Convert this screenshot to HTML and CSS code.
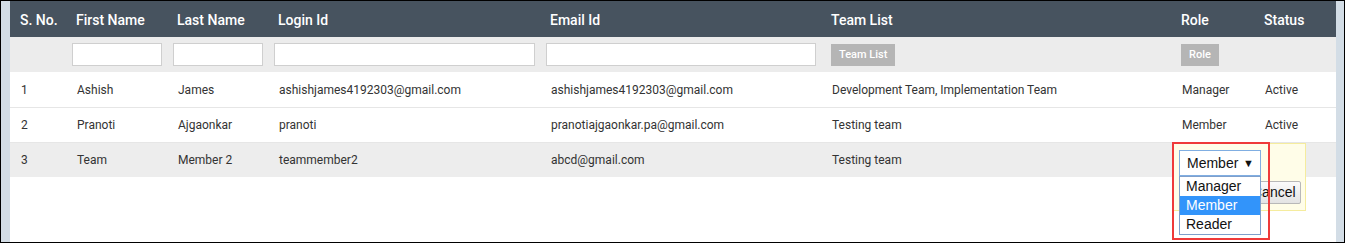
FILE: index.html
```html
<!DOCTYPE html>
<html>
<head>
<meta charset="utf-8">
<link rel="stylesheet" href="styles.css">
</head>
<body>
<div class="frame">
  <div class="content">
    <table class="grid">
      <colgroup>
        <col class="c1"><col class="c2"><col class="c3"><col class="c4"><col class="c5"><col class="c6"><col class="c7"><col class="c8">
      </colgroup>
      <thead>
        <tr class="head">
          <th>S. No.</th><th>First Name</th><th>Last Name</th><th>Login Id</th><th>Email Id</th><th>Team List</th><th>Role</th><th>Status</th>
        </tr>
        <tr class="filter">
          <td></td>
          <td class="fin"><input class="inp" type="text"></td>
          <td class="fin"><input class="inp" type="text"></td>
          <td class="fin"><input class="inp" type="text"></td>
          <td class="fin"><input class="inp" type="text"></td>
          <td><span class="fbtn">Team List</span></td>
          <td><span class="fbtn">Role</span></td>
          <td></td>
        </tr>
      </thead>
      <tbody>
        <tr class="row">
          <td>1</td><td>Ashish</td><td>James</td><td>ashishjames4192303@gmail.com</td><td>ashishjames4192303@gmail.com</td><td>Development Team, Implementation Team</td><td>Manager</td><td>Active</td>
        </tr>
        <tr class="row">
          <td>2</td><td>Pranoti</td><td>Ajgaonkar</td><td>pranoti</td><td>pranotiajgaonkar.pa@gmail.com</td><td>Testing team</td><td>Member</td><td>Active</td>
        </tr>
        <tr class="row alt">
          <td>3</td><td>Team</td><td>Member 2</td><td>teammember2</td><td>abcd@gmail.com</td><td>Testing team</td>
          <td class="editcell">
            <div class="editor">
              <div class="select"><span>Member</span><span class="arrow">▼</span></div>
              <span class="cancel">Cancel</span>
            </div>
            <ul class="options">
              <li>Manager</li>
              <li class="sel">Member</li>
              <li>Reader</li>
            </ul>
            <div class="mark"></div>
          </td>
          <td></td>
        </tr>
      </tbody>
    </table>
  </div>
</div>
</body>
</html>
```

FILE: styles.css
```css
* { box-sizing: border-box; }
html, body { margin: 0; padding: 0; background: #fff; }
.frame {
  width: 1345px;
  height: 243px;
  border: 1px solid #000;
  background: #d3dde6;
  padding: 0 8px 0 9px;
  overflow: hidden;
}
.content {
  background: #fff;
  height: 241px;
}
.grid {
  width: 1326px;
  border-collapse: collapse;
  table-layout: fixed;
  font-family: Roboto, "Liberation Sans", sans-serif;
}
.c1 { width: 56px; }
.c2 { width: 101px; }
.c3 { width: 101px; }
.c4 { width: 272px; }
.c5 { width: 281px; }
.c6 { width: 350px; }
.c7 { width: 83px; }
.c8 { width: 82px; }
.head th {
  background: #47535f;
  color: #fff;
  font-size: 14px;
  font-weight: 500;
  text-align: left;
  height: 36px;
  padding: 1px 0 0 10px;
}
.filter td {
  background: #ececec;
  height: 35px;
  padding: 0 0 0 10px;
  vertical-align: middle;
}
.filter td.fin { padding: 0 5px 0 6px; }
.inp {
  display: block;
  width: 100%;
  height: 23px;
  border: 1px solid #cfcfcf;
  background: #fff;
  margin: 0;
  padding: 0;
}
.fbtn {
  display: inline-block;
  background: #b5b5b5;
  color: #fff;
  font-size: 11px;
  font-weight: 500;
  height: 22px;
  line-height: 22px;
  padding: 0 8px;
}
.row td {
  height: 35px;
  font-size: 12px;
  color: #333;
  padding: 1px 0 0 11px;
  border-bottom: 1px solid #e6e6e6;
  white-space: nowrap;
}
.row.alt td { background: #ededed; border-bottom: none; height: 35px; }
.editcell { position: relative; }
.editor {
  position: absolute;
  left: 1px;
  top: 0;
  width: 134px;
  height: 68px;
  background: #fffde8;
  border: 1px solid #f5ec9e;
  z-index: 1;
}
.select {
  position: absolute;
  left: 6px;
  top: 6px;
  width: 82px;
  height: 26px;
  background: #fff;
  border: 1px solid #80aee2;
  font-family: "Liberation Sans", Arial, sans-serif;
  font-size: 14px;
  color: #111;
  padding: 0 0 0 7px;
  line-height: 25px;
  display: flex;
  justify-content: space-between;
}
.arrow { font-size: 11px; padding-right: 6px; }
.cancel {
  position: absolute;
  left: 70px;
  top: 37px;
  width: 58px;
  height: 23px;
  border: 1px solid #b8b8b8;
  border-radius: 2px;
  background: linear-gradient(#fbfbfb, #e3e3e3);
  font-family: "Liberation Sans", Arial, sans-serif;
  font-size: 14px;
  color: #111;
  line-height: 21px;
  padding-left: 8px;
}
.options {
  position: absolute;
  left: 8px;
  top: 33px;
  width: 82px;
  margin: 0;
  padding: 0;
  list-style: none;
  background: #fff;
  border: 1px solid #7f9fcb;
  z-index: 2;
  font-family: "Liberation Sans", Arial, sans-serif;
  font-size: 14px;
  color: #111;
}
.options li {
  height: 19px;
  line-height: 19px;
  padding-left: 6px;
}
.options li.sel { background: #3294fa; color: #fff; }
.mark {
  position: absolute;
  left: 1px;
  top: -1px;
  width: 98px;
  height: 98px;
  border: 2px solid #ef3a3a;
  z-index: 3;
}
```
